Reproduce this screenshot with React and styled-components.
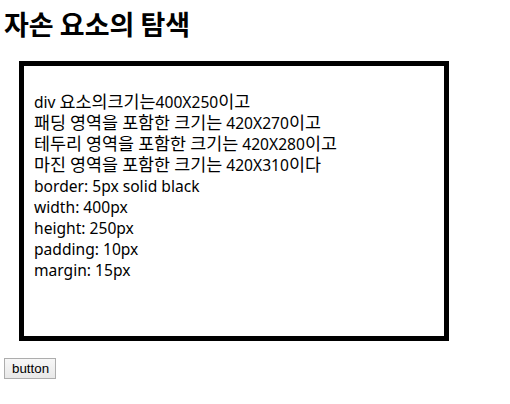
import React from "react";
import styled, { createGlobalStyle } from "styled-components";

const Global = createGlobalStyle`
  html, body { margin: 0; padding: 0; background: #fff; }
  body { font-family: "Noto Sans", "Noto Sans CJK KR", sans-serif; color: #000; }
`;

const Page = styled.div`
  display: flex;
  flex-direction: column;
  padding: 4px;
`;

const Heading = styled.h1`
  margin: 4px 0 6px 0;
  font-family: "Noto Sans CJK KR", sans-serif;
  font-size: 27px;
  line-height: 32px;
  font-weight: 700;
`;

const Box = styled.div`
  box-sizing: content-box;
  width: 400px;
  height: 250px;
  padding: 10px;
  margin: 15px;
  border: 5px solid black;
`;

const Text = styled.p`
  margin: 16px 0 0 0;
  font-size: 15.6px;
  line-height: 21px;
`;

const Hangul = styled.span`
  font-family: "Noto Sans CJK KR", sans-serif;
  font-size: 17.4px;
  line-height: 1;
`;

const Button = styled.button`
  align-self: flex-start;
  margin-top: 2px;
  height: 21px;
  padding: 0 6px 0 7px;
  font-family: "Liberation Sans", Arial, sans-serif;
  font-size: 13.33px;
  color: #000;
  background: linear-gradient(#f7f7f7, #e8e8e8);
  border: 1px solid #adadad;
  border-radius: 0;
`;

const lines = [
  "div 요소의크기는400X250이고",
  "패딩 영역을 포함한 크기는 420X270이고",
  "테두리 영역을 포함한 크기는 420X280이고",
  "마진 영역을 포함한 크기는 420X310이다",
  "border: 5px solid black",
  "width: 400px",
  "height: 250px",
  "padding: 10px",
  "margin: 15px",
];

function renderRuns(text) {
  const parts = text.split(/([\uAC00-\uD7A3]+)/);
  return parts.map((p, i) =>
    /[\uAC00-\uD7A3]/.test(p) ? <Hangul key={i}>{p}</Hangul> : p
  );
}

export default function App() {
  return (
    <>
      <Global />
      <Page>
        <Heading>자손 요소의 탐색</Heading>
        <Box>
          <Text>
            {lines.map((l, i) => (
              <React.Fragment key={i}>
                {renderRuns(l)}
                {i < lines.length - 1 && <br />}
              </React.Fragment>
            ))}
          </Text>
        </Box>
        <Button>button</Button>
      </Page>
    </>
  );
}
